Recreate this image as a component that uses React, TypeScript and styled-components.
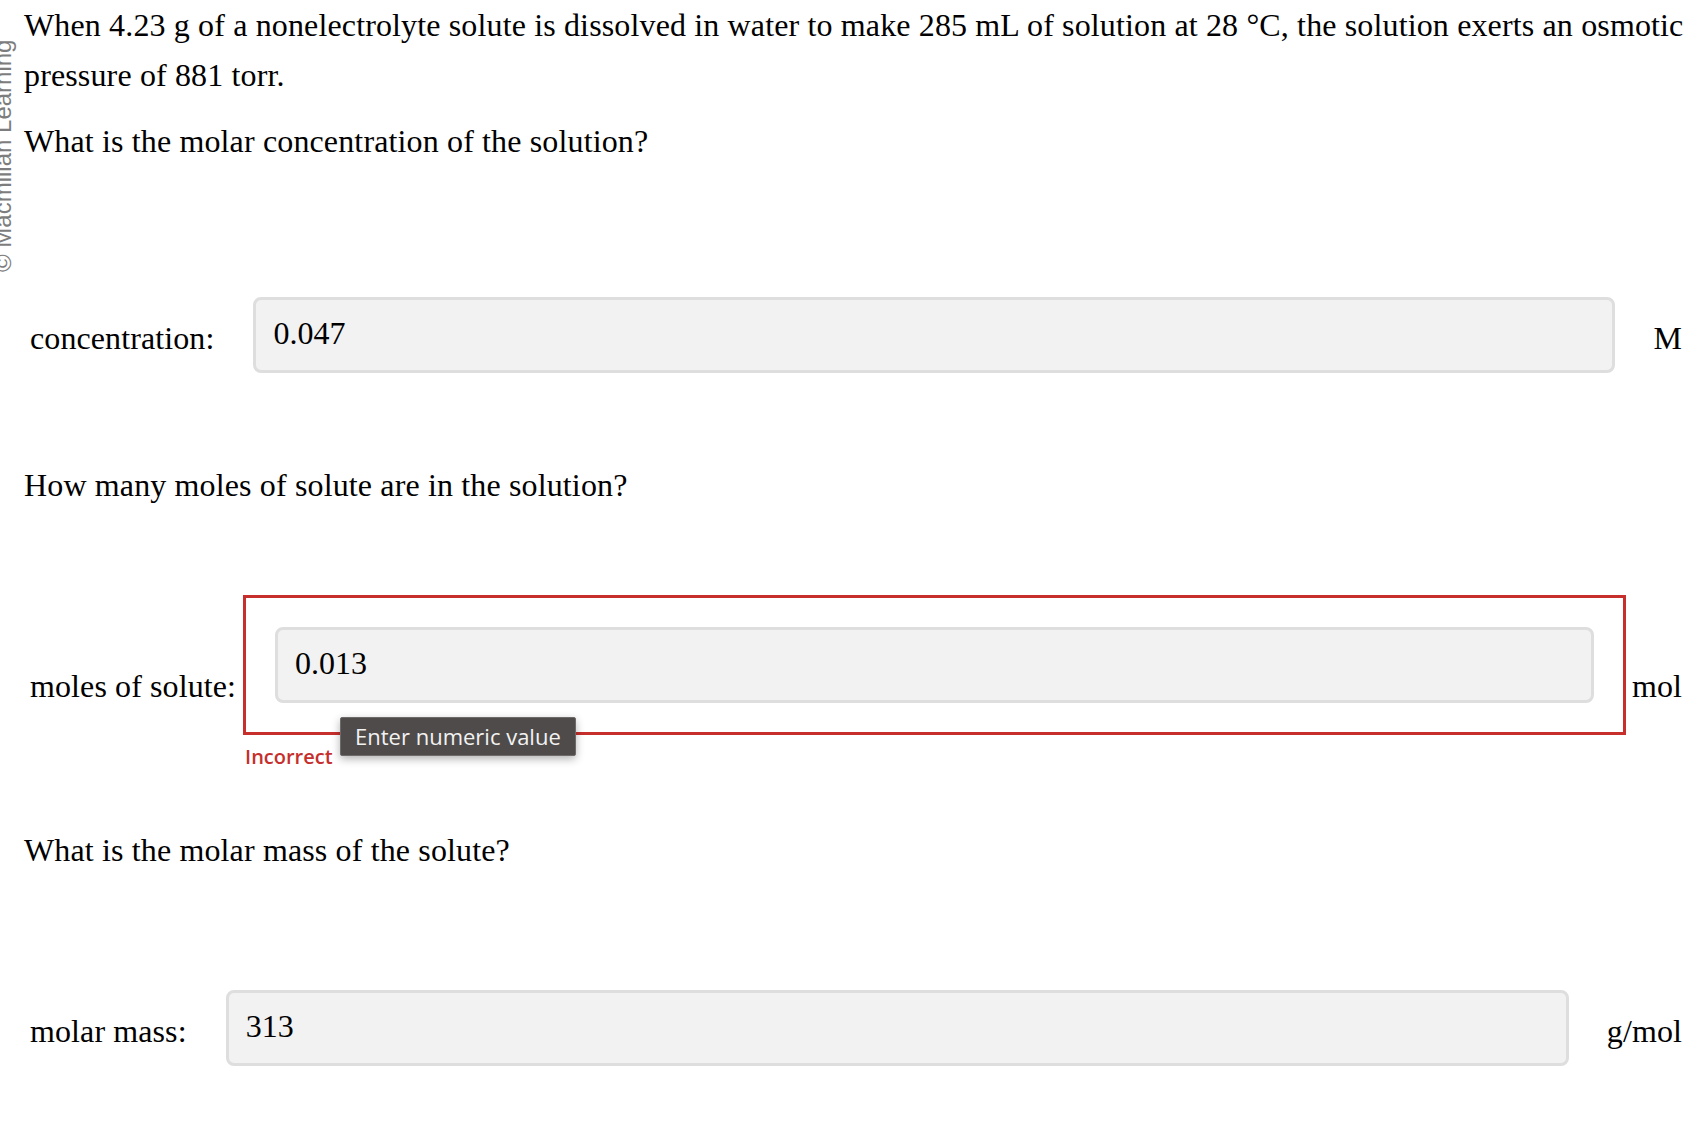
import React from "react";
import styled, { createGlobalStyle } from "styled-components";

const Global = createGlobalStyle`
  html, body { margin: 0; padding: 0; background: #ffffff; }
  body { font-family: "Liberation Serif", "Times New Roman", serif; color: #000; }
`;

const Page = styled.main`
  position: relative;
  width: 1704px;
  min-height: 1132px;
  box-sizing: border-box;
  padding: 0 16px 0 24px;
  overflow: hidden;
`;

const Watermark = styled.div`
  position: absolute;
  left: -9px;
  top: 272px;
  transform-origin: left top;
  transform: rotate(-90deg);
  font-family: "Liberation Sans", Arial, sans-serif;
  font-size: 24px;
  line-height: 24px;
  color: #7d7d7d;
  white-space: nowrap;
`;

const Prompt = styled.p<{ $mt?: number }>`
  margin: ${(p) => p.$mt ?? 0}px 0 0;
  font-size: 32px;
  line-height: 50px;
  letter-spacing: 0.14px;
`;

const Row = styled.div<{ $mt: number }>`
  display: flex;
  align-items: center;
  margin-top: ${(p) => p.$mt}px;
  padding: 0 6px;
`;

const Label = styled.span`
  flex: none;
  margin-right: 7px;
  padding-top: 6px;
  font-size: 32px;
  line-height: 50px;
  letter-spacing: 0.1px;
  white-space: nowrap;
`;

const Unit = styled(Label)`
  margin-right: 0;
  margin-left: 6px;
`;

const Field = styled.div`
  position: relative;
  flex: 1;
  min-width: 0;
`;

const Frame = styled.div<{ $incorrect?: boolean }>`
  border: 3px solid ${(p) => (p.$incorrect ? "#c62f2c" : "transparent")};
  padding: 29px;
`;

const Input = styled.input`
  display: block;
  width: 100%;
  height: 76px;
  box-sizing: border-box;
  margin: 0;
  padding: 0 16px 4px 17px;
  border: 3px solid #dedede;
  border-radius: 8px;
  background: #f2f2f2;
  font-family: "Liberation Serif", "Times New Roman", serif;
  font-size: 32px;
  color: #000;
  outline: none;
`;

const Feedback = styled.div`
  margin-top: 9px;
  padding-left: 2px;
  font-family: "Open Sans", "Liberation Sans", sans-serif;
  font-weight: 600;
  font-size: 20px;
  line-height: 26px;
  color: #c62f2c;
`;

const Tooltip = styled.div`
  position: absolute;
  left: 97px;
  top: 122px;
  height: 39px;
  box-sizing: border-box;
  padding: 0 14px;
  background: #4f4b4a;
  border: 1px solid #6e6a69;
  border-radius: 2px;
  box-shadow: 0 3px 9px rgba(0, 0, 0, 0.3);
  color: #f2f2f2;
  font-family: "Open Sans", "Liberation Sans", sans-serif;
  font-size: 22px;
  line-height: 37px;
  white-space: nowrap;
`;

export default function App() {
  return (
    <>
      <Global />
      <Page>
        <Watermark>© Macmillan Learning</Watermark>
        <Prompt>
          When 4.23 g of a nonelectrolyte solute is dissolved in water to make 285 mL of solution at 28 °C, the
          solution exerts an osmotic pressure of 881 torr.
        </Prompt>
        <Prompt $mt={16}>What is the molar concentration of the solution?</Prompt>
        <Row $mt={99}>
          <Label>concentration:</Label>
          <Field>
            <Frame>
              <Input readOnly value="0.047" />
            </Frame>
          </Field>
          <Unit>M</Unit>
        </Row>
        <Prompt $mt={55}>How many moles of solute are in the solution?</Prompt>
        <Row $mt={85}>
          <Label>moles of solute:</Label>
          <Field>
            <Frame $incorrect>
              <Input readOnly value="0.013" />
            </Frame>
            <Feedback>Incorrect</Feedback>
            <Tooltip>Enter numeric value</Tooltip>
          </Field>
          <Unit>mol</Unit>
        </Row>
        <Prompt $mt={55}>What is the molar mass of the solute?</Prompt>
        <Row $mt={83}>
          <Label>molar mass:</Label>
          <Field>
            <Frame>
              <Input readOnly value="313" />
            </Frame>
          </Field>
          <Unit>g/mol</Unit>
        </Row>
      </Page>
    </>
  );
}
